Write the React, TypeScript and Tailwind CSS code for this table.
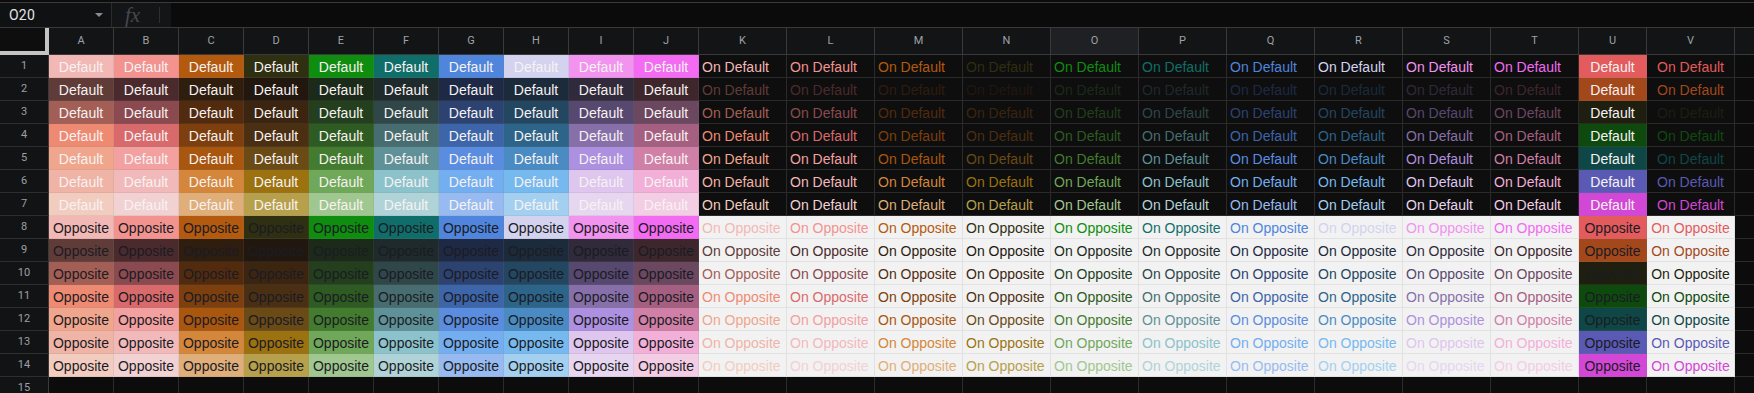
import React from 'react';

type C = [string, string];

const AJ: C[][] = [
  [
    ['bg-[#f2b8b5]', 'text-[#f2b8b5]'],
    ['bg-[#603c38]', 'text-[#603c38]'],
    ['bg-[#a35f55]', 'text-[#a35f55]'],
    ['bg-[#ef8a72]', 'text-[#ef8a72]'],
    ['bg-[#f0a68c]', 'text-[#f0a68c]'],
    ['bg-[#f0b4a6]', 'text-[#f0b4a6]'],
    ['bg-[#f2cdbf]', 'text-[#f2cdbf]'],
  ],
  [
    ['bg-[#f29390]', 'text-[#f29390]'],
    ['bg-[#4b2a2d]', 'text-[#4b2a2d]'],
    ['bg-[#8b4a4f]', 'text-[#8b4a4f]'],
    ['bg-[#d86a6c]', 'text-[#d86a6c]'],
    ['bg-[#f2a0a0]', 'text-[#f2a0a0]'],
    ['bg-[#f2b9bb]', 'text-[#f2b9bb]'],
    ['bg-[#f2d1d3]', 'text-[#f2d1d3]'],
  ],
  [
    ['bg-[#b35a0f]', 'text-[#b35a0f]'],
    ['bg-[#2f1d0e]', 'text-[#2f1d0e]'],
    ['bg-[#522b0f]', 'text-[#522b0f]'],
    ['bg-[#7d3f0d]', 'text-[#7d3f0d]'],
    ['bg-[#a9560e]', 'text-[#a9560e]'],
    ['bg-[#d4873a]', 'text-[#d4873a]'],
    ['bg-[#dfae79]', 'text-[#dfae79]'],
  ],
  [
    ['bg-[#2f2f11]', 'text-[#2f2f11]'],
    ['bg-[#22170f]', 'text-[#22170f]'],
    ['bg-[#3b2510]', 'text-[#3b2510]'],
    ['bg-[#4b2f13]', 'text-[#4b2f13]'],
    ['bg-[#6a4a15]', 'text-[#6a4a15]'],
    ['bg-[#9b720f]', 'text-[#9b720f]'],
    ['bg-[#b7a04b]', 'text-[#b7a04b]'],
  ],
  [
    ['bg-[#0e8d0e]', 'text-[#0e8d0e]'],
    ['bg-[#1b2a19]', 'text-[#1b2a19]'],
    ['bg-[#233f1e]', 'text-[#233f1e]'],
    ['bg-[#2d5b21]', 'text-[#2d5b21]'],
    ['bg-[#437c2f]', 'text-[#437c2f]'],
    ['bg-[#70a85a]', 'text-[#70a85a]'],
    ['bg-[#a0c78f]', 'text-[#a0c78f]'],
  ],
  [
    ['bg-[#106e6a]', 'text-[#106e6a]'],
    ['bg-[#1f2a2c]', 'text-[#1f2a2c]'],
    ['bg-[#2f4749]', 'text-[#2f4749]'],
    ['bg-[#476d70]', 'text-[#476d70]'],
    ['bg-[#5f9198]', 'text-[#5f9198]'],
    ['bg-[#8cc2cb]', 'text-[#8cc2cb]'],
    ['bg-[#b0d3d8]', 'text-[#b0d3d8]'],
  ],
  [
    ['bg-[#4f85dc]', 'text-[#4f85dc]'],
    ['bg-[#1e2a45]', 'text-[#1e2a45]'],
    ['bg-[#2c4371]', 'text-[#2c4371]'],
    ['bg-[#3d65a9]', 'text-[#3d65a9]'],
    ['bg-[#5a8de0]', 'text-[#5a8de0]'],
    ['bg-[#73aef0]', 'text-[#73aef0]'],
    ['bg-[#97bbf0]', 'text-[#97bbf0]'],
  ],
  [
    ['bg-[#d3d3f0]', 'text-[#d3d3f0]'],
    ['bg-[#1b2b3b]', 'text-[#1b2b3b]'],
    ['bg-[#234661]', 'text-[#234661]'],
    ['bg-[#2d6489]', 'text-[#2d6489]'],
    ['bg-[#4a8bc4]', 'text-[#4a8bc4]'],
    ['bg-[#76b9ee]', 'text-[#76b9ee]'],
    ['bg-[#a3d0f0]', 'text-[#a3d0f0]'],
  ],
  [
    ['bg-[#f193ef]', 'text-[#f193ef]'],
    ['bg-[#302a3a]', 'text-[#302a3a]'],
    ['bg-[#57486f]', 'text-[#57486f]'],
    ['bg-[#8770a9]', 'text-[#8770a9]'],
    ['bg-[#ad90df]', 'text-[#ad90df]'],
    ['bg-[#dfc6ef]', 'text-[#dfc6ef]'],
    ['bg-[#e7d6ef]', 'text-[#e7d6ef]'],
  ],
  [
    ['bg-[#f26bf2]', 'text-[#f26bf2]'],
    ['bg-[#3d272d]', 'text-[#3d272d]'],
    ['bg-[#6b4760]', 'text-[#6b4760]'],
    ['bg-[#a56081]', 'text-[#a56081]'],
    ['bg-[#d080a7]', 'text-[#d080a7]'],
    ['bg-[#f2afd8]', 'text-[#f2afd8]'],
    ['bg-[#f3cde4]', 'text-[#f3cde4]'],
  ],
];

const U: C[] = [
  ['bg-[#e35b5c]', 'text-[#e35b5c]'],
  ['bg-[#a3481b]', 'text-[#a3481b]'],
  ['bg-[#1e1f0f]', 'text-[#1e1f0f]'],
  ['bg-[#0e4a0e]', 'text-[#0e4a0e]'],
  ['bg-[#0f4746]', 'text-[#0f4746]'],
  ['bg-[#5a5ab5]', 'text-[#5a5ab5]'],
  ['bg-[#d247d6]', 'text-[#d247d6]'],
];

const LETTERS = ['A', 'B', 'C', 'D', 'E', 'F', 'G', 'H', 'I', 'J', 'K', 'L', 'M', 'N', 'O', 'P', 'Q', 'R', 'S', 'T', 'U', 'V'];

function colWidth(i: number): string {
  if (i < 10) return 'w-[65px]';
  if (i < 20) return 'w-[88px]';
  if (i === 20) return 'w-[68px]';
  return 'w-[88px]';
}

const cellBase =
  'shrink-0 h-full border-r border-b overflow-hidden whitespace-nowrap text-[14px] leading-[24px] font-["Liberation_Sans",Arial,sans-serif]';

function FilledCell({ w, c, opp }: { w: string; c: C; opp: boolean }) {
  return (
    <div
      className={`${cellBase} ${w} ${c[0]} border-[#80808024] text-center ${
        opp ? 'text-[#1b1b24]' : 'text-[#f7f2f2]'
      }`}
    >
      {opp ? 'Opposite' : 'Default'}
    </div>
  );
}

function OnCell({ w, c, opp, center }: { w: string; c: C; opp: boolean; center: boolean }) {
  return (
    <div
      className={`${cellBase} ${w} ${c[1]} ${
        opp ? 'bg-[#f2f2f2] border-[#e2e2e2]' : 'bg-[#0e0e0e] border-[#2b2b2b]'
      } ${center ? 'text-center' : 'pl-[3px]'}`}
    >
      {opp ? 'On Opposite' : 'On Default'}
    </div>
  );
}

function EmptyCell({ w }: { w: string }) {
  return <div className={`${cellBase} ${w} bg-[#0c0c0c] border-[#2b2b2b]`} />;
}

function RowHeader({ n }: { n: number }) {
  return (
    <div className="shrink-0 w-[49px] h-full bg-[#121315] border-r border-b border-r-[#3a3a3a] border-b-[#2e2e2e] flex items-center justify-center text-[11px] text-[#9aa0a6] font-['Roboto',Arial,sans-serif]">
      {n}
    </div>
  );
}

export default function App() {
  const rows = Array.from({ length: 14 }, (_, r) => r);
  return (
    <div className="w-[1754px] h-[393px] overflow-hidden bg-[#0c0c0c] pt-[2px] font-['Roboto',Arial,sans-serif]">
      {/* Formula bar */}
      <div className="h-[26px] flex border-t border-b border-[#3a3a3a]">
        <div className="w-[112px] shrink-0 h-full bg-[#101113] flex items-center pl-[9px] pr-[8px] border-r border-[#2a2b2e]">
          <span className="text-[14px] text-[#e3e4e6] tracking-[0.2px]">O20</span>
          <span className="ml-auto w-0 h-0 border-l-[4px] border-r-[4px] border-t-[4px] border-l-transparent border-r-transparent border-t-[#8a8c90]" />
        </div>
        <div className="w-[59px] shrink-0 h-full bg-[#141517] flex items-center">
          <span className="ml-[13px] w-[34px] text-[21px] leading-none italic text-[#45484d] font-['Liberation_Serif',serif]">
            fx
          </span>
          <span className="h-[16px] border-l border-[#2e2f33]" />
        </div>
        <div className="flex-1 h-full bg-[#0b0b0b]" />
      </div>

      {/* Column headers */}
      <div className="h-[27px] flex">
        <div className="shrink-0 w-[49px] h-full bg-[#0e0e0f] border-r-[4px] border-b-[4px] border-[#c4c4c4]" />
        {LETTERS.map((l, i) => (
          <div
            key={l}
            className={`shrink-0 ${colWidth(i)} h-full border-r border-b border-[#3a3a3a] flex items-center justify-center text-[11px] text-[#9ea2a8] ${
              l === 'O' ? 'bg-[#1f2023]' : 'bg-[#131416]'
            }`}
          >
            {l}
          </div>
        ))}
        <div className="flex-1 h-full bg-[#131416] border-b border-[#3a3a3a]" />
      </div>

      {/* Grid rows */}
      {rows.map((r) => {
        const idx = r % 7;
        const opp = r >= 7;
        return (
          <div key={r} className="h-[23px] flex">
            <RowHeader n={r + 1} />
            {AJ.map((col, i) => (
              <FilledCell key={`a${i}`} w={colWidth(i)} c={col[idx]} opp={opp} />
            ))}
            {AJ.map((col, i) => (
              <OnCell key={`k${i}`} w={colWidth(i + 10)} c={col[idx]} opp={opp} center={false} />
            ))}
            <FilledCell w={colWidth(20)} c={U[idx]} opp={opp} />
            <OnCell w={colWidth(21)} c={U[idx]} opp={opp} center={true} />
            <div className="flex-1 h-full bg-[#0c0c0c] border-b border-[#2b2b2b]" />
          </div>
        );
      })}

      {/* Row 15 */}
      <div className="h-[23px] flex">
        <RowHeader n={15} />
        {LETTERS.map((l, i) => (
          <EmptyCell key={l} w={colWidth(i)} />
        ))}
        <div className="flex-1 h-full bg-[#0c0c0c] border-b border-[#2b2b2b]" />
      </div>
    </div>
  );
}
